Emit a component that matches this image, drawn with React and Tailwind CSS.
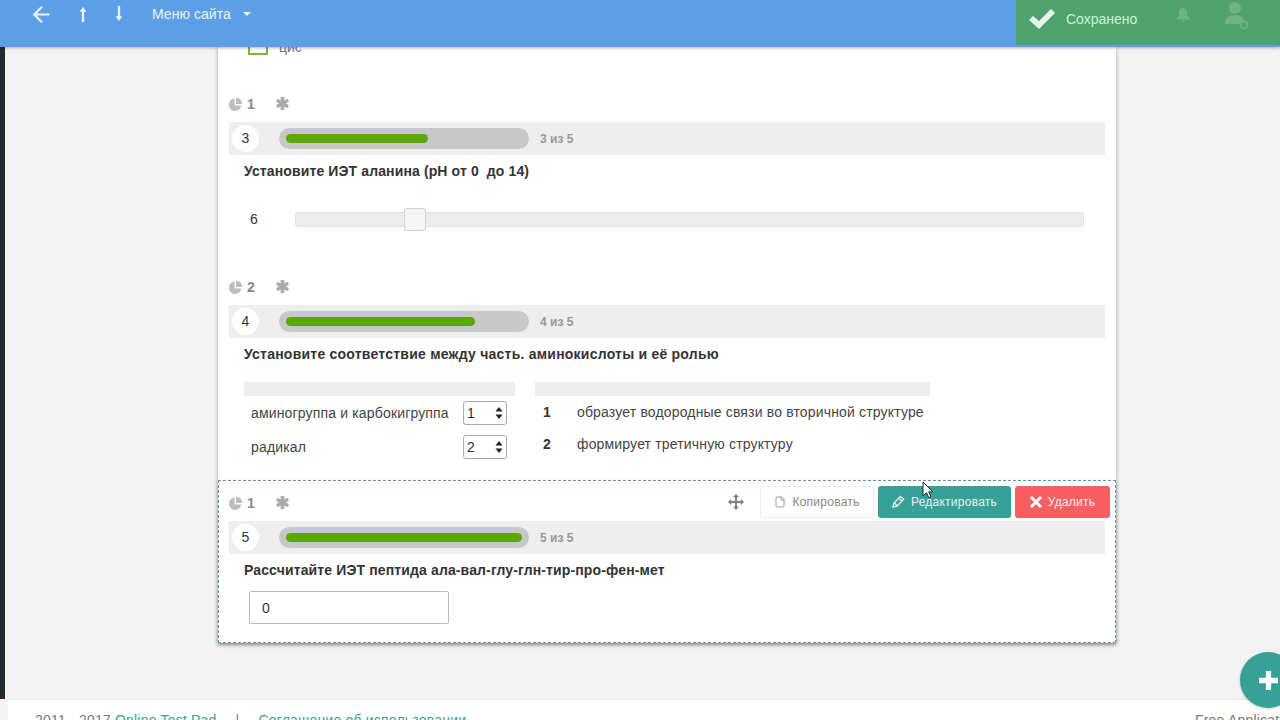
import { ArrowLeft, File } from 'lucide-react';

function PieIcon() {
  return (
    <svg viewBox="0 0 16 16" className="w-[15px] h-[15px] fill-[#bdbdbd]">
      <path d="M7 1.500a6.700 6.700 0 1 0 7.200 7.600H7z" />
      <path d="M8.600 0.800v6.600h6.600A6.700 6.700 0 0 0 8.600.8z" />
    </svg>
  );
}

function StarIcon() {
  return (
    <svg viewBox="0 0 14 14" className="w-[13px] h-[13px] fill-[#aaaaaa] -mt-[2px]">
      <path d="M5 0h4v3.800l3.300-1.900 1.700 3L10.700 7 14 9l-1.700 3L9 10.200V14H5v-3.800L1.700 12 0 9l3.300-2L0 5l1.700-3L5 3.800z" />
    </svg>
  );
}

function Caret() {
  return (
    <svg viewBox="0 0 8 12" className="w-[8px] h-[12px] fill-[#222]">
      <path d="M4 0l3.500 4.600H.5zM4 12L.5 7.400h7z" />
    </svg>
  );
}

function Meta({ score, children }) {
  return (
    <div className="h-[35px] flex items-center pl-[10px] pr-[6px]">
      <PieIcon />
      <span className="ml-[4px] w-[29px] text-[14px] font-bold text-[#888] -mt-[1px]">{score}</span>
      <StarIcon />
      {children}
    </div>
  );
}

function Progress({ num, done }) {
  return (
    <div className="h-[33px] mx-[11px] bg-[#eeeeee] flex items-center pl-[3px]">
      <div className="w-[27px] h-[27px] rounded-full bg-white flex items-center justify-center text-[14px] text-[#333]">{num}</div>
      <div className="ml-[20px] w-[250px] h-[21px] rounded-full bg-[#c8c8c8] flex items-center px-[7px]">
        <div className="h-[9px] rounded-full bg-[#5aa70a]" style={{ width: `${(done / 5) * 236}px` }} />
      </div>
      <span className="ml-[11px] text-[12px] font-bold text-[#999]">{done} из 5</span>
    </div>
  );
}

function Title({ className, children }) {
  return <div className={`h-[32px] pl-[26px] flex items-center text-[14px] font-bold text-[#333] whitespace-pre ${className}`}>{children}</div>;
}

function Select({ value }) {
  return (
    <div className="w-[44px] h-[24px] border border-[#aaa] rounded-[3px] bg-white flex items-center justify-between pl-[3px] pr-[3px] text-[14px] text-[#333]">
      {value}
      <Caret />
    </div>
  );
}

function Btn({ className, children }) {
  return <div className={`h-[32px] rounded-[3px] flex items-center justify-center text-[12px] tracking-[0.25px] ${className}`}>{children}</div>;
}

export default function App() {
  return (
    <div className="relative h-[720px] overflow-hidden flex flex-col bg-[#f3f3f3] font-['Liberation_Sans',Arial,sans-serif]">
      {/* Header */}
      <header className="relative z-10 h-[47px] shrink-0 bg-[#5c9fe6] shadow-[0_1px_3px_rgba(0,0,0,0.3)] flex items-start text-[#eef5fd]">
        <ArrowLeft className="ml-[29px] mt-[2px] w-[25px] h-[25px]" strokeWidth={2} />
        <svg viewBox="0 0 10 18" className="ml-[24px] mt-[6px] w-[10px] h-[17px] fill-[#eef5fd]">
          <path d="M5 1l3.600 5H6.200v11H3.800V6H1.400z" />
        </svg>
        <svg viewBox="0 0 10 18" className="ml-[26px] mt-[5px] w-[10px] h-[17px] fill-[#eef5fd]">
          <path d="M5 17l3.600-5H6.200V1H3.800v11H1.400z" />
        </svg>
        <span className="ml-[28px] mt-[4px] text-[14px] tracking-[0.05px]">Меню сайта</span>
        <div className="ml-[12px] mt-[12px] w-0 h-0 border-x-[4px] border-x-transparent border-t-[4px] border-t-[#eef5fd]" />
        {/* Saved toast */}
        <div className="ml-auto w-[264px] h-[45px] bg-[#50a26c] flex items-start pl-[13px]">
          <svg viewBox="0 0 26 20" className="mt-[9px] w-[26px] h-[20px] fill-[#e6f3ee]">
            <path d="M0 11l4-4 6 5L22 0l4 4-16 16z" />
          </svg>
          <span className="ml-[11px] mt-[9px] text-[14px] text-[#cdf3d8]">Сохранено</span>
          <svg viewBox="0 0 14 14" className="ml-[39px] mt-[8px] w-[14px] h-[14px] fill-[#6cb582]">
            <path d="M7 0c3 0 4 2.500 4 5 0 3 1 4 2.500 5.500v1h-13v-1C2 9 3 8 3 5c0-2.500 1-5 4-5zM5 12.500h4L7 14z" />
          </svg>
          <svg viewBox="0 0 26 30" className="ml-[34px] mt-px w-[26px] h-[30px] fill-[#6cb582]">
            <circle cx="11" cy="7" r="6" />
            <path d="M1 23c0-6 4-9 10-9s8 2 9 5a6 6 0 0 0-4 4z" />
            <circle cx="20" cy="24" r="3.500" fill="none" stroke="#6cb582" strokeWidth="2" />
          </svg>
        </div>
      </header>

      <div className="flex-1 min-h-0 flex">
        <div className="w-[5px] shrink-0 bg-[#1f2b2e]" />
        <main className="flex-1 min-w-0 pl-[213px]">
          <div className="w-[898px] h-[596px] bg-white shadow-[0_1px_4px_rgba(0,0,0,0.35)]">
            {/* Previous question tail */}
            <div className="h-[40px] overflow-hidden">
              <div className="-mt-[10px] ml-[30px] flex items-center">
                <div className="w-[20px] h-[14px] border-2 border-[#7fb24a]" />
                <span className="ml-[11px] text-[14px] text-[#777]">цис</span>
              </div>
            </div>

            {/* Question 3 */}
            <section className="h-[183px]">
              <Meta score="1" />
              <Progress num={3} done={3} />
              <Title className="tracking-[0.12px]">Установите ИЭТ аланина (pH от 0  до 14)</Title>
              <div className="mt-[22px] flex items-center pl-[32px]">
                <span className="w-[45px] text-[14px] text-[#333]">6</span>
                <div className="w-[789px] h-[15px] rounded-[3px] border border-[#e2e2e2] bg-[#ececec] pl-[108px] flex items-center">
                  <div className="w-[22px] h-[23px] shrink-0 rounded-[3px] border border-[#d0d0d0] bg-[#f5f5f5]" />
                </div>
              </div>
            </section>

            {/* Question 4 */}
            <section className="h-[210px]">
              <Meta score="2" />
              <Progress num={4} done={4} />
              <Title className="tracking-[0.23px]">Установите соответствие между часть. аминокислоты и её ролью</Title>
              <div className="mt-[12px] ml-[26px] flex gap-[20px] text-[14px] text-[#444] tracking-[0.16px]">
                <div className="w-[271px]">
                  <div className="h-[14px] bg-[#eeeeee]" />
                  <div className="mt-[5px] h-[24px] pl-[7px] pr-[8px] flex items-center justify-between">
                    аминогруппа и карбокигруппа
                    <Select value="1" />
                  </div>
                  <div className="mt-[10px] h-[24px] pl-[7px] pr-[8px] flex items-center justify-between">
                    радикал
                    <Select value="2" />
                  </div>
                </div>
                <div className="w-[395px]">
                  <div className="h-[14px] bg-[#eeeeee]" />
                  <div className="mt-[4px] h-[24px] flex items-center">
                    <span className="w-[42px] pl-[8px] font-bold text-[#333]">1</span>
                    образует водородные связи во вторичной структуре
                  </div>
                  <div className="mt-[8px] h-[24px] flex items-center">
                    <span className="w-[42px] pl-[8px] font-bold text-[#333]">2</span>
                    формирует третичную структуру
                  </div>
                </div>
              </div>
            </section>

            {/* Question 5, selected */}
            <section className="h-[163px] outline-1 outline-dashed -outline-offset-1 outline-[#6f9590] pt-[6px] shadow-[0_2px_4px_rgba(0,0,0,0.25)]">
              <Meta score="1">
                <div className="ml-auto -mt-[4px] flex items-center gap-[4px]">
                  <svg viewBox="0 0 16 16" className="mr-[12px] w-[16px] h-[16px] fill-[#78838c]">
                    <path d="M8 0l3 3.200H9V7h3.800V5L16 8l-3.200 3V9H9v3.800h2L8 16l-3-3.200h2V9H3.200v2L0 8l3.200-3v2H7V3.200H5z" />
                  </svg>
                  <Btn className="w-[114px] gap-[6px] bg-white border border-[#eeeeee] text-[#888]">
                    <File className="w-[12px] h-[12px] text-[#999]" />
                    Копировать
                  </Btn>
                  <Btn className="w-[133px] gap-[6px] bg-[#35a197] text-[#e6f5f3]">
                    <svg viewBox="0 0 14 14" className="w-[13px] h-[13px] fill-none stroke-[#e6f5f3]" strokeWidth="1.500">
                      <path d="M1 13l1-4 7-7.500 3.500 3L5.500 12zM3 9l3 3M8 4l2.500 2.500" />
                    </svg>
                    Редактировать
                  </Btn>
                  <Btn className="w-[95px] gap-[6px] bg-[#f85f60] text-[#fdeeee]">
                    <svg viewBox="0 0 12 12" className="w-[12px] h-[12px] stroke-white" strokeWidth="3">
                      <path d="M1 1l10 10M11 1L1 11" />
                    </svg>
                    Удалить
                  </Btn>
                </div>
              </Meta>
              <Progress num={5} done={5} />
              <Title className="tracking-[0.13px]">Рассчитайте ИЭТ пептида ала-вал-глу-глн-тир-про-фен-мет</Title>
              <input
                readOnly
                value="0"
                className="ml-[31px] mt-[5px] block w-[200px] h-[33px] border border-[#bbbbbb] rounded-[2px] px-[12px] text-[14px] text-[#333] bg-white"
              />
            </section>
          </div>
        </main>
      </div>

      {/* Footer, cut by the window */}
      <footer className="shrink-0 h-[21px] ml-[8px] bg-white border-t border-[#e6e6e6] pl-[27px] pt-[12px] flex text-[14px] leading-[16px] tracking-[0.2px] text-[#777] whitespace-nowrap overflow-hidden">
        2011 - 2017&nbsp;
        <span className="text-[#3f9d8d]">Online Test Pad</span>
        <span className="mx-[19px]">|</span>
        <span className="text-[#3f9d8d]">Соглашение об использовании</span>
        <span className="ml-auto w-[85px] overflow-hidden">Free Applications</span>
      </footer>

      {/* Floating add button */}
      <div className="absolute left-[1240px] top-[652px] w-[56px] h-[56px] rounded-full bg-[#35a197] shadow-[0_1px_3px_rgba(0,0,0,0.2)] flex items-center pl-[19px]">
        <svg viewBox="0 0 18 18" className="w-[19px] h-[19px] fill-white">
          <path d="M6.500 0h5v6.500H18v5h-6.500V18h-5v-6.500H0v-5h6.500z" />
        </svg>
      </div>

      {/* Mouse cursor */}
      <svg viewBox="0 0 12 18" className="absolute left-[922px] top-[481px] w-[12px] h-[18px] z-20">
        <path d="M1 1v14l3.500-3.300 2.300 5 2.200-1-2.300-4.800H11z" fill="#fff" stroke="#222" strokeWidth="1" />
      </svg>
    </div>
  );
}
